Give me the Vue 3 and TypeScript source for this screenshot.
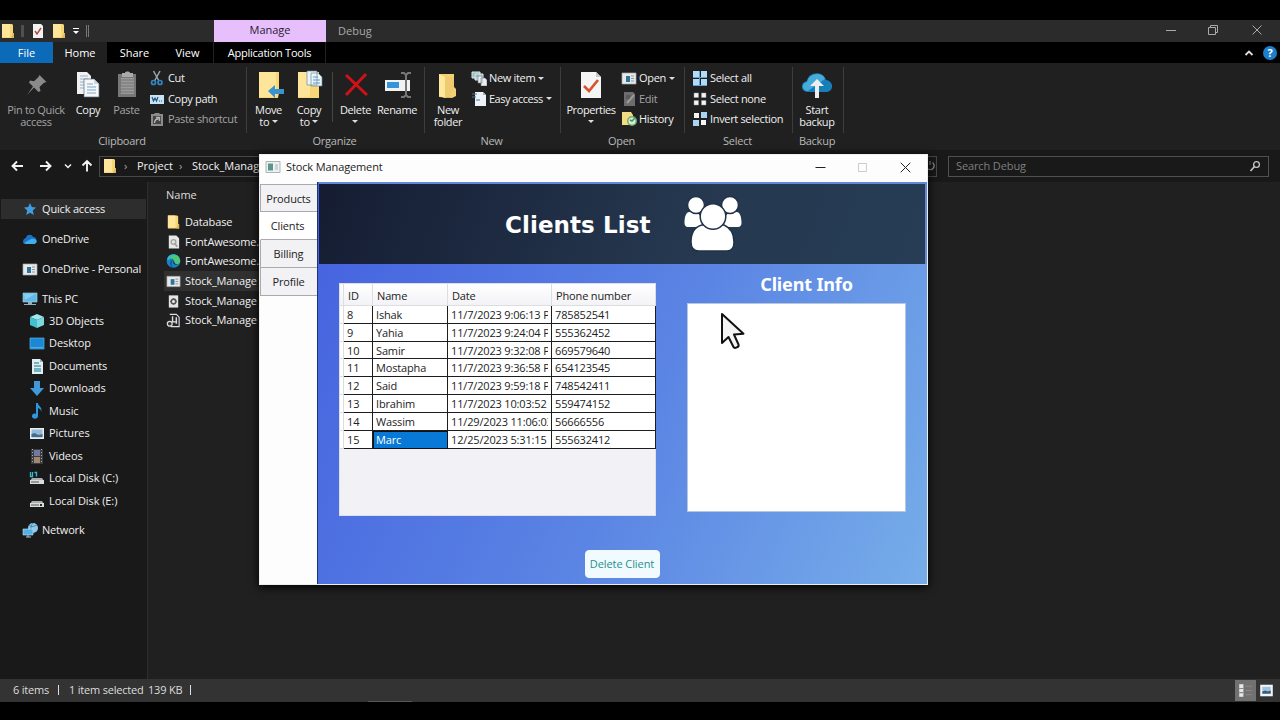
<script setup lang="ts">
interface NavItem {
  label: string
  icon: string
  level: number
  top: number
  active?: boolean
}

interface FileItem {
  label: string
  icon: string
  active?: boolean
}

interface Client {
  id: number
  name: string
  date: string
  phone: string
}

const icons: Record<string, string> = {
  folder: '<path fill="#f7d673" d="M2 1h10l1 1v8l1 1v4H2z"/><path fill="#ffe69a" d="M2 1h8v13H2z"/><path fill="#d9b95c" d="M13 10h1v5h-3z"/>',
  check: '<path fill="#f4f2f1" d="M3 1h8l2 2v12H3z"/><path d="M5 8l2 3 4-6" fill="none" stroke="#a44c45" stroke-width="1.4"/>',
  cut: '<path d="M4.500 1l5.500 10M11 1L5.500 11" stroke="#9aa6b2" stroke-width="1.5"/><g fill="none" stroke="#2f86c4" stroke-width="1.7"><circle cx="4.500" cy="12.500" r="2"/><circle cx="11" cy="12.500" r="2"/></g>',
  path: '<path fill="#c6e4f6" d="M1 4h14v9H1z"/><path d="M3 6l1.500 4L6 7l1.500 3L9 6M10 10h1M12 10h1" fill="none" stroke="#23557e" stroke-width="1.2"/>',
  shortcut: '<path fill="#8c8c8c" d="M2 3h3l1-1h4l1 1h3v12H2z"/><path fill="#444" d="M4 5h8v8H4z"/><path d="M5.500 12c0-3 1-4 4-4M7 6.500h3.500V10" fill="none" stroke="#b5b5b5" stroke-width="1.300"/>',
  newitem: '<g fill="#9ab7bd" stroke="#d9ecef"><path d="M1 2h8v6H1zM4 4h8v6H4z"/></g><path fill="#eceef0" stroke="#708087" stroke-width=".6" d="M7 6h4v7H7zM10 8h4l2 2v6h-6z"/>',
  easy: '<path fill="#eef3f7" d="M4 1h8l3 3v11H4z"/><path d="M1 3h5M1 6h4M5 9h4" stroke="#407aa5"/><path fill="#a5b1bd" d="M12 1v3h3z"/>',
  app: '<path fill="#e7e9e9" stroke="#a9aaaa" stroke-width=".7" d="M1 3h14v11H1z"/><path fill="#2e7399" d="M5 6h4v6H5z"/><path stroke="#8b9599" d="M10 6h3M10 8.500h3M10 11h3"/>',
  edit: '<path fill="#6d6d6d" d="M3 1h9l2 2v12H3z"/><path d="M6 12l7-8" stroke="#999" stroke-width="2"/><path stroke="#484848" d="M5 5h5M5 7h4"/>',
  history: '<path fill="#f1dc83" d="M1 1h9l2 3v10H1z"/><circle cx="11" cy="10" r="5" fill="#6fad69"/><circle cx="11" cy="10" r="3.500" fill="#dceadd"/><path d="M14 7l-3 3-2-1" fill="none" stroke="#4b9454" stroke-width="1.500"/>',
  selall: '<path fill="#b3dbf5" d="M1 1h6v6H1zM9 1h6v6H9zM1 9h6v6H1zM9 9h6v6H9z"/><path stroke="#5ba4d5" fill="none" d="M1 7.500h14M1 15.500h14M7.500 1v14"/>',
  selnone: '<path fill="#f4f4f4" stroke="#9b9b9b" stroke-width=".5" d="M2 2h4.500v4.500H2zM9.500 2H14v4.500H9.500zM2 9.500h4.500V14H2zM9.500 9.500H14V14H9.500z"/>',
  invert: '<path fill="#f4f4f4" d="M2 2h5v5H2zM9 9h5v5H9z"/><path fill="#a7d5f4" d="M9 1h6v6H9zM1 9h6v6H1z"/>',
  star: '<path fill="#3f9ddd" d="M8 2l1.800 4 4.200.4-3.200 3 1 4.600L8 11.700 4.200 14l1-4.600L2 6.400 6.200 6z"/>',
  cloud: '<path fill="#1972c3" d="M1 11c0-3 2-4 3-4 .5-4 6-4 7-1 4-.5 5 6 1 7H4c-2 0-3-1-3-2z"/><path fill="#40adec" d="M2 12l7-4c4-1 7 2 5 4-1 1-2 1-3 1H4z"/>',
  pc: '<path fill="#5fb8e8" stroke="#b7d6e6" stroke-width=".6" d="M1 2h14v9H1z"/><path fill="#86cef2" d="M2 3h11L3 9z"/><path fill="#9cacb4" d="M6 11h4v2H6zM2 13h12v1H2z"/>',
  cube: '<path fill="#9ceaed" d="M1 4l7-3 7 3-7 3z"/><path fill="#42bfd0" d="M1 4l7 3v8l-7-3z"/><path fill="#7bd8df" d="M15 4L8 7v8l7-3z"/>',
  desktop: '<path fill="#1e87d1" stroke="#4cb7ed" stroke-width=".7" d="M1 3h14v11H1z"/><path fill="#46b1ec" d="M2 12h12v1H2z"/>',
  doc: '<path fill="#e5edee" d="M3 1h8l3 3v12H3z"/><path d="M5 5h5M5 8h7M5 11h7M5 13h7" stroke="#4ba2b5" stroke-width="1.300"/><path fill="#8eb6c2" d="M11 1v3h3z"/>',
  download: '<path fill="#4099da" d="M5 1h6v7h4l-7 8-7-8h4z"/>',
  music: '<path fill="#2c97df" d="M7 0h2c0 3 5 4 3 9 0-3-1-3-3-4v8c0 4-7 3-6 0 0-2 2-3 4-2z"/>',
  picture: '<path fill="#e7eef2" d="M1 3h14v11H1z"/><path fill="#97b9d6" d="M2.500 4.500h11v8h-11z"/><path fill="#426e8d" d="M2.500 9l3-1 4 2 4-1v3h-11z"/>',
  video: '<path fill="#3c3d43" d="M2 1h12v15H2z"/><path fill="#7279a2" d="M5 2h6v6H5z"/><path fill="#a28869" d="M5 9h6v6H5z"/><path d="M3.500 1v15M12.500 1v15" stroke="#aaa" stroke-dasharray="1 2"/>',
  disk: '<path fill="#a9adae" d="M3 8h10l2 3H1z"/><path fill="#d9dddd" d="M1 10h14v4H1z"/><path stroke="#555" d="M2 12h8"/><path fill="#282828" d="M11 11h2v2h-2z"/>',
  diskc: '<path fill="#a9adae" d="M3 8h10l2 3H1z"/><path fill="#d9dddd" d="M1 10h14v4H1z"/><path stroke="#555" d="M2 12h8"/><path d="M1.500 2v4.500h2V2M5.500 2.500h2v4" stroke="#3bb8d4" stroke-width="1.300" fill="none"/>',
  network: '<circle cx="11" cy="6" r="5" fill="#8dc9e9"/><path d="M7 3c3 3 5 1 8 0M11 1c-4 5-1 8 0 10" stroke="#4d87b6" fill="none"/><path fill="#52b1e6" stroke="#c2e4f5" stroke-width=".6" d="M1 7h10v6H1z"/><path stroke="#a3c8d9" d="M4 15h5M6 13v2"/>',
  config: '<path fill="#e7e7e7" d="M3 1h8l3 3v11H3z"/><circle cx="8" cy="8" r="2.500" fill="none" stroke="#a3a3a3" stroke-width="1.500"/><path d="M9 9l3 4" stroke="#a3a3a3" stroke-width="2"/>',
  edge: '<circle cx="8" cy="8" r="7.300" fill="#1784c5"/><path fill="#4cc77a" d="M4 2c6-3 12 1 11 7-1 3-6 3-6 0 0-4-5-5-7-2 0-2 1-4 2-5z"/><path fill="#34b8d1" d="M1 6c2-6 9-6 12-3-5-2-9 0-10 4z"/><path fill="#17549a" d="M8 6c-6 2-4 9 1 9-5-2-3-5-1-9z"/><path fill="#222" d="M8.500 8c0 3 3 5 6 3l-3 1c-3 0-5-2-3-4z"/>',
  gear: '<path fill="#e5e5e5" d="M3 2h10v13H3z"/><circle cx="8" cy="8.500" r="2.500" fill="none" stroke="#555" stroke-width="1.700"/><path d="M8 5v1M8 11v1M4.500 8.500h1M10.500 8.500h1" stroke="#555"/>',
  project: '<path fill="#262626" stroke="#ddd" stroke-width="1.200" d="M4 2h7l3 3v10H5"/><path d="M7 4v6h5M11 5v7" fill="none" stroke="#ddd" stroke-width="1.500"/><circle cx="4" cy="12" r="2.600" fill="#333" stroke="#ddd" stroke-width="1.300"/>'
}

const nav: NavItem[] = [
  { label: 'Quick access', icon: 'star', level: 0, top: 17, active: true },
  { label: 'OneDrive', icon: 'cloud', level: 0, top: 10 },
  { label: 'OneDrive - Personal', icon: 'app', level: 0, top: 10 },
  { label: 'This PC', icon: 'pc', level: 0, top: 10 },
  { label: '3D Objects', icon: 'cube', level: 1, top: 2.5 },
  { label: 'Desktop', icon: 'desktop', level: 1, top: 2.5 },
  { label: 'Documents', icon: 'doc', level: 1, top: 2.5 },
  { label: 'Downloads', icon: 'download', level: 1, top: 2.5 },
  { label: 'Music', icon: 'music', level: 1, top: 2.5 },
  { label: 'Pictures', icon: 'picture', level: 1, top: 2.5 },
  { label: 'Videos', icon: 'video', level: 1, top: 2.5 },
  { label: 'Local Disk (C:)', icon: 'diskc', level: 1, top: 2.5 },
  { label: 'Local Disk (E:)', icon: 'disk', level: 1, top: 2.5 },
  { label: 'Network', icon: 'network', level: 0, top: 9.5 }
]

const files: FileItem[] = [
  { label: 'Database', icon: 'folder' },
  { label: 'FontAwesome.', icon: 'config' },
  { label: 'FontAwesome.', icon: 'edge' },
  { label: 'Stock_Manage', icon: 'app', active: true },
  { label: 'Stock_Manage', icon: 'gear' },
  { label: 'Stock_Manage', icon: 'project' }
]

const clients: Client[] = [
  { id: 8, name: 'Ishak', date: '11/7/2023 9:06:13 P', phone: '785852541' },
  { id: 9, name: 'Yahia', date: '11/7/2023 9:24:04 P', phone: '555362452' },
  { id: 10, name: 'Samir', date: '11/7/2023 9:32:08 P', phone: '669579640' },
  { id: 11, name: 'Mostapha', date: '11/7/2023 9:36:58 P', phone: '654123545' },
  { id: 12, name: 'Said', date: '11/7/2023 9:59:18 P', phone: '748542411' },
  { id: 13, name: 'Ibrahim', date: '11/7/2023 10:03:52', phone: '559474152' },
  { id: 14, name: 'Wassim', date: '11/29/2023 11:06:03', phone: '56666556' },
  { id: 15, name: 'Marc', date: '12/25/2023 5:31:15', phone: '555632412' }
]

const tabs = ['Products', 'Clients', 'Billing', 'Profile']
</script>

<template>
  <div class="screen">
    <div class="titlebar">
      <div class="quickbar">
        <svg class="ic" viewBox="0 0 16 16" v-html="icons.folder" />
        <i class="bar wide" />
        <svg class="ic q2" viewBox="0 0 16 16" v-html="icons.check" />
        <svg class="ic q3" viewBox="0 0 16 16" v-html="icons.folder" />
        <svg class="qdrop" viewBox="0 0 8 8"><path d="M1 1.500h6" stroke="#fff" /><path d="M1 4h6L4 7z" fill="#fff" /></svg>
        <i class="bar thin" />
      </div>
      <div class="manage">Manage</div>
      <div class="wintitle">Debug</div>
      <svg class="wc min" viewBox="0 0 12 12"><path d="M1 6.500h10" /></svg>
      <svg class="wc rest" viewBox="0 0 12 12"><path d="M1.500 3.500h7v7h-7zM3.500 3.500v-2h7v7h-2" /></svg>
      <svg class="wc cls" viewBox="0 0 12 12"><path d="M1.500 1.500l9 9M10.500 1.500l-9 9" /></svg>
    </div>
    <div class="tabbar">
      <div class="tab file">File</div>
      <div class="tab home">Home</div>
      <div class="tab share">Share</div>
      <div class="tab view">View</div>
      <div class="tab tools">Application Tools</div>
      <svg class="chev" viewBox="0 0 10 8"><path d="M1.500 6L5 2.500 8.500 6" fill="none" stroke="#ddd" stroke-width="1.800" /></svg>
      <div class="help">?</div>
    </div>

    <div class="ribbon">
      <section class="group clipboard">
        <div class="tools-row">
          <div class="big dim pin">
            <svg viewBox="0 0 32 32"><path d="M19.500 7l7 7-2.500.8-4.500 4.200 1 4-2 1-4.500-4.500-7 7.500 6-8.500-4-4 1-2 4 .8 4.500-4.300z" fill="#8a8a8a" /></svg>
            <span>Pin to Quick<br>access</span>
          </div>
          <div class="big copy">
            <svg viewBox="0 0 32 32"><path d="M5 4h10l4 4v18H5z" fill="#f1f1f2" /><path d="M8 8h8M8 11h8M8 14h5M8 17h5M8 20h5" stroke="#92b3cf" /><path d="M12 11h10l5 5v13H12z" fill="#f7f7f7" stroke="#596e7a" stroke-width=".7" /><path d="M15 16h6M15 19h9M15 22h9M15 25h9" stroke="#75a8d1" /><path d="M22 11v5h5" fill="#c5dae7" /></svg>
            <span>Copy</span>
          </div>
          <div class="big dim paste">
            <svg viewBox="0 0 32 32"><path d="M7 6h18v23H7z" fill="#777" /><path d="M11 5h3c0-2 5-2 5 0h3v4H11z" fill="#aaa" /><path d="M10 10h13v16H10z" fill="#9a9a9a" /><path d="M10 12h13M10 15h13M10 18h13M10 21h13M10 24h13" stroke="#747474" /></svg>
            <span>Paste</span>
          </div>
          <div class="smalls">
            <div class="small"><svg viewBox="0 0 16 16" v-html="icons.cut" />Cut</div>
            <div class="small"><svg viewBox="0 0 16 16" v-html="icons.path" />Copy path</div>
            <div class="small dim"><svg viewBox="0 0 16 16" v-html="icons.shortcut" />Paste shortcut</div>
          </div>
        </div>
        <footer>Clipboard</footer>
      </section>

      <section class="group organize">
        <div class="tools-row">
          <div class="big move">
            <svg viewBox="0 0 32 32"><path d="M6 4h20v21l-1 5H6z" fill="#f8d779" /><path d="M6 4h17v25H6z" fill="#ffe59a" /><path d="M15 23l7-6v4h9v5h-9v4z" fill="#3993d1" /></svg>
            <span>Move<br>to <b class="arrow" /></span>
          </div>
          <div class="big copyto">
            <svg viewBox="0 0 32 32"><path d="M5 4h21v26H5z" fill="#f8d779" /><path d="M5 4h12v25H5z" fill="#ffe59a" /><path d="M14 3h10v14H14zM18 5h7l4 4v9H18z" fill="#edf4f8" stroke="#64899f" stroke-width=".7" /><path d="M20 9h5M20 12h7M20 15h7" stroke="#6598c1" /></svg>
            <span>Copy<br>to <b class="arrow" /></span>
          </div>
          <i class="divider" />
          <div class="big delete">
            <svg viewBox="0 0 32 32"><path d="M6 7l21 20M26 6L6 27" stroke="#cf1118" stroke-width="3" /></svg>
            <span>Delete<br><b class="arrow" /></span>
          </div>
          <div class="big rename">
            <svg viewBox="0 0 32 32"><path d="M4 12h25v11H4z" fill="#f2f2f2" /><path d="M6 14h12v6H6z" fill="#3695da" /><path d="M20 5h3l2 2 2-2h3M20 29h3l2-2 2 2h3M25 7v20" fill="none" stroke="#777" stroke-width="2" /></svg>
            <span>Rename</span>
          </div>
        </div>
        <footer>Organize</footer>
      </section>

      <section class="group new">
        <div class="tools-row">
          <div class="big newfolder">
            <svg viewBox="0 0 32 32"><path d="M7 6h15v13l2 2v7l-4 2-13-1z" fill="#f3d078" /><path d="M7 6l6 3v21l-6-2z" fill="#ffe79c" /><path d="M13 9h9v13l-3 3v4l-6 1z" fill="#efcb70" /></svg>
            <span>New<br>folder</span>
          </div>
          <div class="smalls">
            <div class="small"><svg viewBox="0 0 16 16" v-html="icons.newitem" />New item <b class="arrow" /></div>
            <div class="small tight"><svg viewBox="0 0 16 16" v-html="icons.easy" />Easy access <b class="arrow" /></div>
          </div>
        </div>
        <footer>New</footer>
      </section>

      <section class="group open">
        <div class="tools-row">
          <div class="big props">
            <svg viewBox="0 0 32 32"><path d="M6 4h15l5 5v21H6z" fill="#f5f5f5" /><path d="M21 4v5h5" fill="#c8c8c8" /><path d="M9 18l5 5 9-11" fill="none" stroke="#d4542e" stroke-width="2.700" /></svg>
            <span>Properties<br><b class="arrow" /></span>
          </div>
          <div class="smalls">
            <div class="small"><svg viewBox="0 0 16 16" v-html="icons.app" />Open <b class="arrow" /></div>
            <div class="small dim"><svg viewBox="0 0 16 16" v-html="icons.edit" />Edit</div>
            <div class="small"><svg viewBox="0 0 16 16" v-html="icons.history" />History</div>
          </div>
        </div>
        <footer>Open</footer>
      </section>

      <section class="group select">
        <div class="tools-row">
          <div class="smalls">
            <div class="small"><svg viewBox="0 0 16 16" v-html="icons.selall" />Select all</div>
            <div class="small"><svg viewBox="0 0 16 16" v-html="icons.selnone" />Select none</div>
            <div class="small"><svg viewBox="0 0 16 16" v-html="icons.invert" />Invert selection</div>
          </div>
        </div>
        <footer>Select</footer>
      </section>

      <section class="group backup">
        <div class="tools-row">
          <div class="big">
            <svg viewBox="0 0 32 32"><path d="M7 24c-8 0-8-10-1-11 1-9 16-11 19-1 8 1 8 11 1 12z" fill="#187eb9" /><path d="M6 14c2-9 15-11 18-3l-6 4-11 8c-6 0-7-8-1-9z" fill="#47abda" /><path d="M16 11l7 7h-5v12h-4V18H9z" fill="#eee" /></svg>
            <span>Start<br>backup</span>
          </div>
        </div>
        <footer>Backup</footer>
      </section>
    </div>

    <div class="addressbar">
      <svg class="nav-arrows" viewBox="0 0 90 20" fill="none" stroke="#f2f2f2" stroke-width="1.900">
        <path d="M17 10H7m4-4.500L6.500 10l4.500 4.500M34 10h10m-4-4.500l4.500 4.500-4.500 4.500M81 15.500V5m-4.500 4.500L81 5l4.500 4.500" />
        <path d="M59 8.500l3 3 3-3" stroke-width="1.500" />
      </svg>
      <div class="crumbs">
        <svg class="ic" viewBox="0 0 16 16" v-html="icons.folder" />
        <span class="gt">›</span><span>Project</span><span class="gt">›</span><span>Stock_Manag</span>
        <svg class="reload" viewBox="0 0 12 12"><path d="M8.500 2.500a4 4 0 1 1-5 .2M6 1v4" fill="none" stroke="#8b8b8b" stroke-width="1.300" /></svg>
      </div>
      <div class="search">
        <span>Search Debug</span>
        <svg viewBox="0 0 14 14"><circle cx="8.500" cy="5.500" r="2.900" fill="none" stroke="#c8c8c8" stroke-width="1.300" /><path d="M6.500 7.500L2.500 12" stroke="#c8c8c8" stroke-width="1.600" /></svg>
      </div>
    </div>

    <div class="body">
      <nav>
        <div
          v-for="item in nav"
          :key="item.label"
          class="nav-item"
          :class="{ nested: item.level === 1, active: item.active }"
          :style="{ marginTop: item.top + 'px' }"
        >
          <svg viewBox="0 0 16 16" v-html="icons[item.icon]" />{{ item.label }}
        </div>
      </nav>
      <main>
        <div class="colhead">Name</div>
        <div v-for="(file, i) in files" :key="i" class="file-item" :class="{ active: file.active }">
          <svg viewBox="0 0 16 16" v-html="icons[file.icon]" />{{ file.label }}
        </div>
      </main>
    </div>

    <div class="status">
      <span class="s1">6 items</span><i /><span class="s2">1 item selected</span><span class="s3">139 KB</span><i />
      <div class="viewmode list"><svg viewBox="0 0 20 20"><path d="M4 4h4v12H4z" fill="#e7e7e7" /><path d="M4 8h4M4 12h4" stroke="#888" /><path d="M10 6h6M10 10h6M10 14h6" stroke="#888" /></svg></div>
      <div class="viewmode"><svg viewBox="0 0 20 20"><path d="M4 4.500h12v11H4z" fill="#f0f4f7" /><path d="M6 6.500h8v6H6z" fill="#9fc4e3" /><path d="M6 11l3-1 2 1 3-1v3H6z" fill="#365c7b" /></svg></div>
    </div>
    <div class="edge-line" />

    <div class="window">
      <header class="app-title">
        <svg class="appicon" viewBox="0 0 16 16"><path d="M1 2.500h14v11H1z" fill="#eef1f1" stroke="#a9b5b5" /><path d="M3 4.500h5v7H3z" fill="#5d958d" /><path d="M10 5h3v6h-3z" fill="#c8d5d3" /></svg>
        <span>Stock Management</span>
        <svg class="aw a1" viewBox="0 0 11 11"><path d="M.5 5.500h10" /></svg>
        <svg class="aw a2" viewBox="0 0 11 11"><path d="M1.500 1.500h8v8h-8z" /></svg>
        <svg class="aw a3" viewBox="0 0 11 11"><path d="M.7.700l9.600 9.600M10.300.700L.700 10.300" /></svg>
      </header>
      <div class="app-body">
        <aside>
          <div v-for="tab in tabs" :key="tab" class="side-tab" :class="{ selected: tab === 'Clients' }">{{ tab }}</div>
        </aside>
        <div class="pane">
          <div class="hero">
            <h1>Clients List</h1>
            <svg viewBox="0 0 58 56" fill="#fff">
              <path d="M11.500 17C15 17 18 20 18 31H4c-2.500 0-3.500-2-3.500-4 0-5 1-11 5-11zM46.500 17C43 17 40 20 40 31h14c2.500 0 3.500-2 3.500-4 0-5-1-11-5-11z" />
              <g stroke="#213246" stroke-width="1.500">
                <circle cx="12" cy="9" r="8.500" /><circle cx="46" cy="9" r="8.500" />
                <path d="M18 29h22c7 3 10 10 10 17 0 6-3 9-7 9H15c-5 0-8-3-8-9 0-8 3-15 11-17z" /><circle cx="29" cy="20.500" r="12.800" />
              </g>
            </svg>
          </div>
          <div class="columns">
            <div class="grid">
              <div class="row head"><span /><span>ID</span><span>Name</span><span>Date</span><span>Phone number</span></div>
              <div v-for="c in clients" :key="c.id" class="row">
                <span class="rh" />
                <span>{{ c.id }}</span>
                <span :class="{ picked: c.id === 15 }">{{ c.name }}</span>
                <span><em>{{ c.date }}</em></span>
                <span>{{ c.phone }}</span>
              </div>
            </div>
            <div class="info">
              <h2>Client Info</h2>
              <div class="infobox" />
            </div>
          </div>
          <button>Delete Client</button>
        </div>
      </div>
    </div>

    <svg class="cursor" viewBox="0 0 26 38"><path d="M2 2v29l6.500-6 5 10c1 2 6 0 5-2.500L14 22.500l9.500-.8z" fill="#f3f3f3" stroke="#111" stroke-width="2" stroke-linejoin="round" /></svg>
  </div>
</template>

<style>
body {
  background: #000;
}
</style>

<style scoped>
* {
  box-sizing: border-box;
}
.screen {
  position: relative;
  width: 1280px;
  height: 720px;
  padding-top: 20px;
  overflow: hidden;
  background: #000;
  color: #f0f0f0;
  font: 11px/12px "Open Sans", "Noto Sans", sans-serif;
  white-space: nowrap;
}
svg {
  display: block;
  flex: none;
}
.ic {
  width: 16px;
  height: 16px;
}
.titlebar {
  display: flex;
  align-items: center;
  height: 22px;
  background: #2b2b2b;
}
.quickbar {
  display: flex;
  align-items: center;
  width: 214px;
  height: 22px;
}
.bar.wide {
  width: 3px;
  height: 12px;
  margin-left: 5px;
  background: #505050;
}
.bar.thin {
  width: 3px;
  height: 12px;
  margin-left: 6px;
  border: solid #777;
  border-width: 0 1px;
}
.q2 {
  margin-left: 6px;
}
.q3 {
  margin-left: 5px;
}
.qdrop {
  width: 8px;
  height: 8px;
  margin-left: 5px;
}
.manage {
  width: 112px;
  height: 22px;
  line-height: 19px;
  text-align: center;
  color: #282030;
  background: #e7bffd;
}
.wintitle {
  width: 839px;
  padding-left: 12px;
  color: #aaa;
}
.wc {
  width: 12px;
  height: 12px;
  fill: none;
  stroke: #aaa;
  margin-top: -2px;
}
.rest {
  margin-left: 30px;
}
.cls {
  margin-left: 32px;
}
.tabbar {
  display: flex;
  align-items: center;
  height: 21px;
  color: #fff;
}
.tab {
  height: 21px;
  line-height: 21px;
  text-align: center;
}
.file {
  width: 53px;
  background: #0b6bb8;
}
.home {
  width: 54px;
  background: #202020;
}
.share {
  width: 55px;
}
.view {
  width: 51px;
}
.tools {
  width: 113px;
  border: solid #222;
  border-width: 0 1px;
  letter-spacing: -0.25px;
}
.chev {
  width: 10px;
  height: 8px;
  margin-left: 918px;
}
.help {
  width: 14px;
  height: 14px;
  margin-left: 9px;
  border-radius: 50%;
  background: #1d7fc9;
  font-weight: 700;
  line-height: 14px;
  text-align: center;
}
.ribbon {
  display: flex;
  height: 87px;
  background: #202020;
  letter-spacing: -0.33px;
}
.group {
  position: relative;
  display: flex;
  flex-direction: column;
  height: 87px;
}
.group::after {
  content: "";
  position: absolute;
  right: 0;
  top: 4px;
  width: 1px;
  height: 66px;
  background: #3d3d3d;
}
.clipboard {
  width: 247px;
}
.organize {
  width: 178px;
}
.new {
  width: 136px;
}
.open {
  width: 124px;
}
.select {
  width: 108px;
}
.backup {
  width: 51px;
}
.tools-row {
  display: flex;
  height: 67px;
  padding-top: 5px;
}
.group footer {
  padding: 5px 3px 0 0;
  text-align: center;
  color: #b8b8b8;
  letter-spacing: -0.25px;
}
.big {
  display: flex;
  flex-direction: column;
  align-items: center;
  text-align: center;
}
.big svg {
  width: 32px;
  height: 32px;
  margin-bottom: 4px;
}
.dim {
  color: #a5a5a5;
}
.pin {
  width: 72px;
}
.copy {
  width: 32px;
}
.paste {
  width: 45px;
}
.move {
  width: 43px;
}
.copyto {
  width: 38px;
}
.delete {
  width: 41px;
}
.rename {
  width: 42px;
}
.divider {
  width: 1px;
  height: 50px;
  margin: 4px 2px 0 4px;
  background: #444;
}
.newfolder {
  width: 46px;
}
.props {
  width: 60px;
  letter-spacing: -0.4px;
}
.backup .big {
  width: 48px;
}
.smalls {
  display: flex;
  flex-direction: column;
}
.small {
  display: flex;
  align-items: center;
  gap: 3px;
  height: 20.5px;
}
.small svg {
  width: 16px;
  height: 16px;
}
.small.tight {
  letter-spacing: -0.5px;
}
.open .small,
.select .small {
  gap: 2px;
}
.new .small {
  gap: 2px;
}
.select .smalls {
  margin-left: 7px;
}
.arrow {
  display: inline-block;
  border: 3px solid transparent;
  border-top-color: #ddd;
  border-bottom: 0;
  vertical-align: 3px;
}
.small .arrow {
  margin-left: 1px;
}
.addressbar {
  display: flex;
  align-items: center;
  height: 32px;
  background: #191919;
}
.nav-arrows {
  width: 90px;
  height: 20px;
  margin-left: 6px;
}
.crumbs {
  display: flex;
  align-items: center;
  width: 838px;
  height: 21px;
  margin-left: 3px;
  padding-left: 2px;
  border: 1px solid #484848;
}
.gt {
  width: 17px;
  padding-left: 6px;
  margin-right: 2px;
  color: #aaa;
}
.reload {
  width: 12px;
  height: 12px;
  margin-left: auto;
}
.search {
  display: flex;
  align-items: center;
  justify-content: space-between;
  width: 321px;
  height: 21px;
  margin-left: 11px;
  padding: 0 6px 0 7px;
  border: 1px solid #505050;
  color: #7e7e7e;
  letter-spacing: -0.12px;
}
.search svg {
  width: 14px;
  height: 14px;
}
.body {
  display: flex;
  height: 497px;
  background: #202020;
}
nav {
  width: 148px;
  height: 497px;
  overflow: hidden;
  background: #191919;
  border-right: 1px solid #2d2d2d;
}
.nav-item {
  display: flex;
  align-items: center;
  gap: 4px;
  height: 20px;
  padding-left: 22px;
  letter-spacing: -0.18px;
}
.nav-item:nth-child(n + 5) {
  position: relative;
  top: -0.6px;
}
.nav-item svg {
  width: 16px;
  height: 16px;
}
.nav-item.nested {
  padding-left: 29px;
  letter-spacing: -0.08px;
}
.nav-item.active {
  width: 145px;
  padding-left: 21px;
  margin-left: 1px;
  background: #2d2d2d;
}
main {
  width: 1132px;
}
.colhead {
  height: 30px;
  padding: 7px 0 0 18px;
  color: #ddd;
}
.file-item {
  display: flex;
  align-items: center;
  gap: 4px;
  width: 120px;
  height: 19.7px;
  margin-left: 16px;
  padding-left: 2px;
  letter-spacing: -0.14px;
}
.file-item svg {
  width: 15px;
  height: 16px;
}
.file-item.active {
  background: #303030;
}
.status {
  display: flex;
  align-items: center;
  height: 23px;
  padding: 0 0 1px 13px;
  background: #333;
  color: #ddd;
  letter-spacing: -0.2px;
}
.status i {
  width: 1px;
  height: 10px;
  background: #ddd;
}
.s1 {
  width: 45px;
}
.s2 {
  width: 79px;
  margin-left: 10px;
}
.s3 {
  width: 42px;
}
.viewmode {
  width: 21px;
  height: 21px;
}
.viewmode.list {
  margin-left: auto;
  background: #717171;
}
.viewmode:last-child {
  margin-right: 3px;
}
.edge-line {
  width: 44px;
  height: 1px;
  margin: -1px 0 0 368px;
  background: #555;
}
.window {
  position: absolute;
  left: 259px;
  top: 154px;
  width: 669px;
  height: 431px;
  background: #fdfdfd;
  border: 1px solid #eee;
  box-shadow: 0 2px 9px #000;
  color: #1c1c1c;
}
.app-title {
  display: flex;
  align-items: center;
  height: 27px;
  padding: 0 0 3px 5px;
}
.appicon {
  width: 16px;
  height: 16px;
  margin-right: 5px;
}
.app-title span {
  width: 529px;
  letter-spacing: -0.12px;
}
.aw {
  width: 11px;
  height: 11px;
  fill: none;
  stroke: #222;
}
.a2 {
  margin-left: 31px;
  stroke: #ccc;
}
.a3 {
  margin-left: 32px;
}
.app-body {
  display: flex;
  height: 402px;
}
aside {
  width: 57px;
  padding-top: 2px;
}
.side-tab {
  height: 28px;
  border: 1px solid #aaa9b0;
  border-width: 1px 0 1px 1px;
  padding-right: 1px;
  background: #f2f1f4;
  line-height: 27px;
  text-align: center;
  letter-spacing: -0.15px;
}
.side-tab + .side-tab {
  border-top: 0;
  line-height: 28px;
}
.side-tab.selected {
  padding-right: 3px;
  background: #fff;
  border-left-color: #fff;
}
.pane {
  display: flex;
  flex-direction: column;
  align-items: center;
  width: 610px;
  height: 402px;
  padding-left: 1px;
  border-left: 1px solid #1d3377;
  background: linear-gradient(115deg, #4461df 0%, #5b85e4 55%, #76ade9 100%);
}
.hero {
  display: flex;
  align-items: center;
  width: 608px;
  height: 82px;
  padding-left: 185px;
  border: solid #6586d9;
  border-width: 2px 2px 0 0;
  background: linear-gradient(110deg, #151c32, #25384f 60%, #263d55);
}
.hero h1 {
  width: 180px;
  margin: 1px 0 0 1px;
  font: 700 23px/30px "DejaVu Sans", sans-serif;
  letter-spacing: 0.08px;
  color: #fff;
}
.hero svg {
  width: 58px;
  height: 56px;
  margin-left: -1px;
}
.columns {
  display: flex;
  width: 608px;
  height: 286px;
}
.grid {
  width: 317px;
  height: 233px;
  margin: 19px 0 0 20px;
  background: #f2f1f5;
  border: 1px solid #dedfea;
  color: #222;
}
.row {
  display: grid;
  grid-template-columns: 4px 29px 75px 104px 104px;
  height: 17.84px;
}
.row span {
  height: 17.84px;
  padding-left: 3px;
  overflow: hidden;
  line-height: 17px;
  background: #fff;
  border: solid #1d1d1d;
  border-width: 0 1px 1px 0;
  letter-spacing: -0.15px;
}
.row em {
  display: block;
  width: 97px;
  overflow: hidden;
  font-style: normal;
  letter-spacing: -0.16px;
}
.row .rh {
  border-color: #ddd;
}
.row .picked {
  padding-left: 2px;
  color: #fff;
  background: #0879d7;
  border: 1px solid #111;
  line-height: 16px;
}
.row.head,
.row.head span {
  height: 22px;
}
.row.head span {
  padding-left: 4px;
  line-height: 23px;
  background: linear-gradient(#fff, #f3f2f6);
  border-color: #dddde2;
  letter-spacing: -0.15px;
}
.row.head span:first-child {
  padding: 0;
}
.info {
  width: 219px;
  margin-left: 31px;
}
.info h2 {
  margin: 10px 0 8px 20px;
  font: 700 18px/21px "Noto Sans", sans-serif;
  letter-spacing: -0.15px;
  text-align: center;
  color: #fff;
}
.infobox {
  width: 219px;
  height: 209px;
  background: #fff;
  border: 1px solid #b9c7dc;
}
button {
  width: 75px;
  height: 28px;
  margin-right: 2px;
  padding: 0;
  border: 1px solid #f0faff;
  border-radius: 4px;
  background: #f0faff;
  color: #26918b;
  font: 11px/24px "Open Sans", sans-serif;
  letter-spacing: -0.08px;
}
.cursor {
  position: absolute;
  left: 720px;
  top: 312px;
  width: 26px;
  height: 38px;
}
</style>
